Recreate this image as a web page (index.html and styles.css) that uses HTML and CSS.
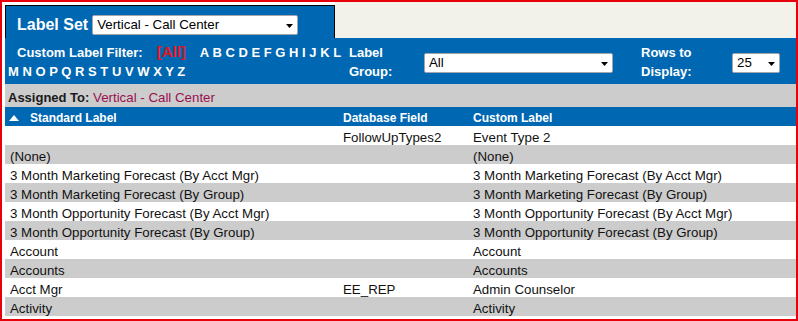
FILE: index.html
```html
<!DOCTYPE html>
<html>
<head>
<meta charset="utf-8">
<link rel="stylesheet" href="styles.css">
</head>
<body>
<div class="frame">
  <div class="top">
    <div class="tabwrap">
      <div class="tab">
        <span class="tab-title">Label Set</span>
        <span class="sel sel-set">
          <span class="sel-text">Vertical - Call Center</span>
          <svg class="arrow" width="7" height="4" viewBox="0 0 7 4"><polygon points="0,0 7,0 3.5,4" fill="#000"/></svg>
        </span>
      </div>
    </div>
    <div class="filler"></div>
  </div>

  <div class="filters">
    <div class="letters">
      <span class="flabel">Custom Label Filter:</span><a class="all">[All]</a><a>A</a> <a>B</a> <a>C</a> <a>D</a> <a>E</a> <a>F</a> <a>G</a> <a>H</a> <a>I</a> <a>J</a> <a>K</a> <a>L</a> <a>M</a> <a>N</a> <a>O</a> <a>P</a> <a>Q</a> <a>R</a> <a>S</a> <a>T</a> <a>U</a> <a>V</a> <a>W</a> <a>X</a> <a>Y</a> <a>Z</a>
    </div>
    <div class="lg">Label Group:</div>
    <span class="sel sel-group">
      <span class="sel-text">All</span>
      <svg class="arrow" width="7" height="4" viewBox="0 0 7 4"><polygon points="0,0 7,0 3.5,4" fill="#000"/></svg>
    </span>
    <div class="rtd">Rows to Display:</div>
    <span class="sel sel-rows">
      <span class="sel-text">25</span>
      <svg class="arrow" width="7" height="4" viewBox="0 0 7 4"><polygon points="0,0 7,0 3.5,4" fill="#000"/></svg>
    </span>
  </div>

  <div class="assigned"><b>Assigned To:</b> <span class="assigned-val">Vertical - Call Center</span></div>

  <table class="grid">
    <colgroup><col class="c1"><col class="c2"><col class="c3"></colgroup>
    <thead>
      <tr>
        <th><svg class="sort" width="10" height="6" viewBox="0 0 10 6"><polygon points="0,6 5,0 10,6" fill="#fff"/></svg>Standard Label</th>
        <th>Database Field</th>
        <th>Custom Label</th>
      </tr>
    </thead>
    <tbody>
      <tr class="w"><td></td><td>FollowUpTypes2</td><td>Event Type 2</td></tr>
      <tr class="g"><td>(None)</td><td></td><td>(None)</td></tr>
      <tr class="w"><td>3 Month Marketing Forecast (By Acct Mgr)</td><td></td><td>3 Month Marketing Forecast (By Acct Mgr)</td></tr>
      <tr class="g"><td>3 Month Marketing Forecast (By Group)</td><td></td><td>3 Month Marketing Forecast (By Group)</td></tr>
      <tr class="w"><td>3 Month Opportunity Forecast (By Acct Mgr)</td><td></td><td>3 Month Opportunity Forecast (By Acct Mgr)</td></tr>
      <tr class="g"><td>3 Month Opportunity Forecast (By Group)</td><td></td><td>3 Month Opportunity Forecast (By Group)</td></tr>
      <tr class="w"><td>Account</td><td></td><td>Account</td></tr>
      <tr class="g"><td>Accounts</td><td></td><td>Accounts</td></tr>
      <tr class="w"><td>Acct Mgr</td><td>EE_REP</td><td>Admin Counselor</td></tr>
      <tr class="g"><td>Activity</td><td></td><td>Activity</td></tr>
    </tbody>
  </table>
</div>
</body>
</html>
```

FILE: styles.css
```css
html, body {
  margin: 0;
  padding: 0;
  background: #fff;
}
body {
  font-family: "Liberation Sans", Arial, sans-serif;
  font-size: 13px;
}
.frame {
  width: 798px;
  height: 321px;
  box-sizing: border-box;
  border: 2px solid #e8000b;
  padding-left: 3px;
  background: #fff;
  overflow: hidden;
}
.top {
  display: flex;
  height: 36px;
}
.tabwrap {
  padding-top: 3px;
}
.tab {
  width: 330px;
  height: 33px;
  box-sizing: border-box;
  border: 1px solid #000;
  border-bottom: none;
  background: #0067b3;
  display: flex;
  align-items: center;
  padding: 9px 0 3px 11px;
}
.tab-title {
  color: #fff;
  font-weight: bold;
  font-size: 16px;
  margin-right: 4px;
}
.filler {
  flex: 1;
  background: #f2f1ea;
}
.sel {
  position: relative;
  display: inline-block;
  height: 20px;
  box-sizing: border-box;
  border: 1px solid #a3a7ad;
  border-radius: 2px;
  background: #fff;
  color: #000;
  font-size: 13.3px;
  line-height: 18px;
  padding-left: 4px;
}
.sel .arrow {
  position: absolute;
  right: 4px;
  top: 8px;
}
.sel-set { width: 206px; }
.sel-group { width: 189px; }
.sel-rows { width: 48px; }

.filters {
  background: #0067b3;
  display: flex;
  align-items: center;
  height: 46px;
  box-sizing: border-box;
  padding: 5px 0 3px 3px;
  color: #fff;
  font-weight: bold;
  line-height: 19px;
}
.letters {
  width: 338px;
}
.flabel {
  margin-left: 9px;
}
.letters a {
  color: #fff;
}
.letters a.all {
  color: #e8141c;
  font-size: 15px;
  line-height: 12px;
  margin: 0 14px 0 14px;
}
.lg {
  width: 75px;
  margin-left: 3px;
}
.rtd {
  width: 91px;
  margin-left: 28px;
}
.sel-group, .sel-rows {
  margin-top: 2px;
  font-weight: normal;
}

.assigned {
  background: #cccccc;
  height: 23px;
  box-sizing: border-box;
  padding: 4px 0 0 3px;
  line-height: 19px;
  color: #1a1a1a;
}
.assigned-val {
  color: #9a1050;
  font-size: 13.3px;
}

.grid {
  width: 791px;
  border-collapse: collapse;
  table-layout: fixed;
}
.c1 { width: 333px; }
.c2 { width: 130px; }
.c3 { width: 328px; }
.grid th {
  background: #0067b3;
  color: #fff;
  font-size: 12px;
  font-weight: bold;
  text-align: left;
  height: 19px;
  box-sizing: border-box;
  padding: 3px 0 0 5px;
  line-height: 16px;
  vertical-align: top;
  white-space: nowrap;
}
.grid th:first-child {
  padding-left: 4px;
}
.sort {
  margin-right: 11px;
  vertical-align: 1px;
}
.grid td {
  height: 19px;
  box-sizing: border-box;
  padding: 4px 0 0 5px;
  line-height: 15px;
  font-size: 13.3px;
  vertical-align: top;
  color: #111;
  white-space: nowrap;
}
.grid tr.w td { background: #fff; }
.grid tr.g td { background: #cccccc; }
```
